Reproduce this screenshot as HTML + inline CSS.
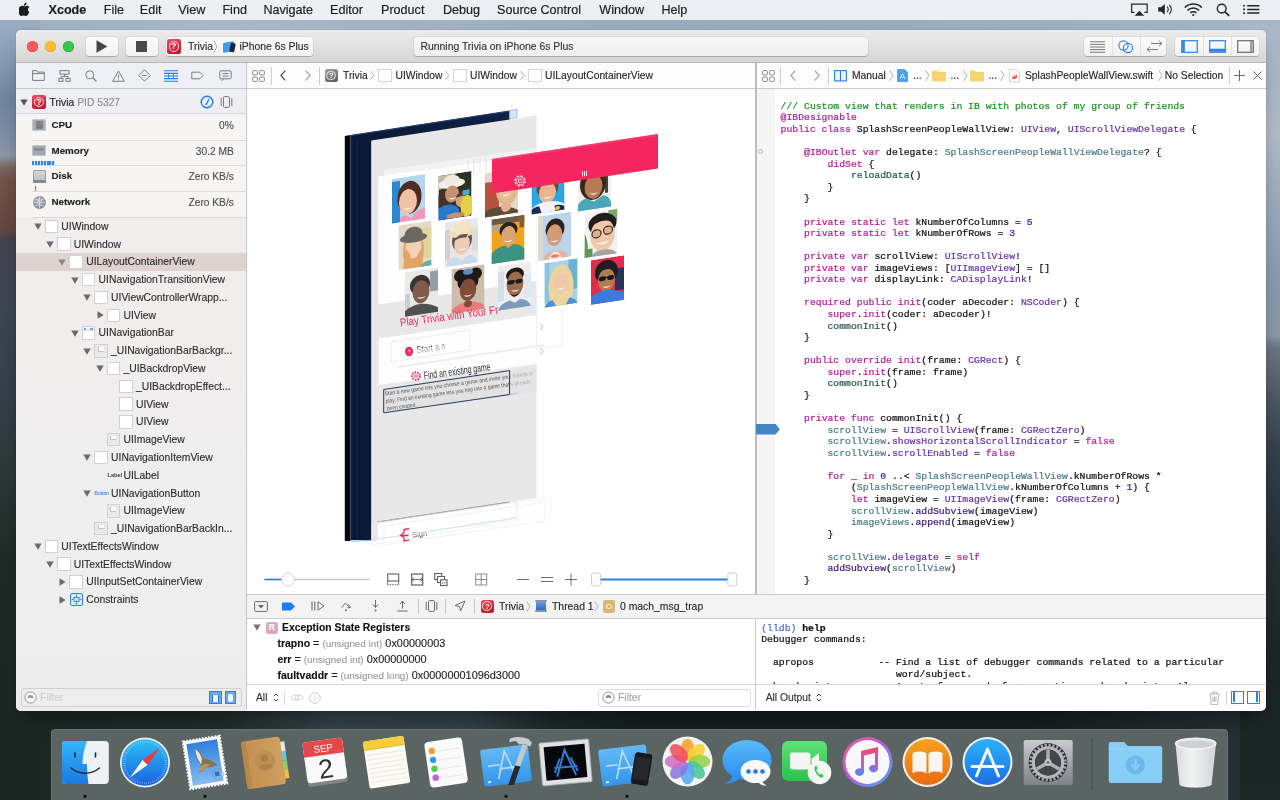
<!DOCTYPE html><html><head><meta charset="utf-8"><title>Xcode</title><style>
*{box-sizing:border-box;margin:0;padding:0}
html,body{width:1280px;height:800px;overflow:hidden}
#win,#menubar,#dock{will-change:transform}
body{position:relative;font-family:"Liberation Sans",sans-serif;font-size:10.3px;color:#262626;background:#2a3535}
.abs{position:absolute}
#wall{position:absolute;left:0;top:0;width:1280px;height:800px}
#menubar{position:absolute;left:0;top:0;width:1280px;height:19.5px;background:rgba(241,243,246,0.93)}
#menubar span{position:absolute;top:2px;font-size:12.6px;line-height:16px;color:#1c1c1c;white-space:nowrap;-webkit-text-stroke:.18px}
#win{position:absolute;left:16px;top:30px;width:1250px;height:680.6px;border-radius:5px;overflow:hidden;background:#fff;box-shadow:0 0 1px rgba(0,0,0,.45),0 14px 22px -8px rgba(0,0,0,.45)}
#toolbar{position:absolute;left:0;top:0;width:1250px;height:32.5px;background:linear-gradient(#ececec,#d6d6d6);border-bottom:1px solid #b9b9b9}
.tbtn{position:absolute;top:7px;height:19px;background:linear-gradient(#fcfcfc,#f1f1f1);border-radius:3.5px;box-shadow:0 0 0 .5px rgba(0,0,0,.09),0 .5px .8px rgba(0,0,0,.2)}
.tl{position:absolute;top:10.5px;width:11px;height:11px;border-radius:50%}
.t{position:absolute;white-space:nowrap;-webkit-text-stroke:.13px}
</style></head><body>
<svg id="wall" width="1280" height="800" viewBox="0 0 1280 800">
<defs>
<linearGradient id="sky" x1="0" y1="0" x2="1" y2="0"><stop offset="0" stop-color="#9eb0c6"/><stop offset=".15" stop-color="#a9b8c9"/><stop offset=".5" stop-color="#9aabbf"/><stop offset=".8" stop-color="#9dadc1"/><stop offset="1" stop-color="#a3b4c8"/></linearGradient>
<linearGradient id="lft" x1="0" y1="0" x2="0" y2="1">
<stop offset="0" stop-color="#a3b5ca"/><stop offset=".075" stop-color="#8a9db5"/><stop offset=".125" stop-color="#7386a0"/><stop offset=".165" stop-color="#7d8ea5"/><stop offset=".195" stop-color="#8d97a6"/><stop offset=".21" stop-color="#7a6560"/><stop offset=".225" stop-color="#74524a"/><stop offset=".285" stop-color="#644840"/><stop offset=".3" stop-color="#44444e"/><stop offset=".375" stop-color="#3f4655"/><stop offset=".5" stop-color="#363f49"/><stop offset=".59" stop-color="#2c3937"/><stop offset=".7" stop-color="#1f2b27"/><stop offset="1" stop-color="#1b2622"/></linearGradient>
<linearGradient id="rgt" x1="0" y1="0" x2="0" y2="1">
<stop offset="0" stop-color="#a6b5c7"/><stop offset=".1" stop-color="#adb9c8"/><stop offset=".17" stop-color="#b2bdc9"/><stop offset=".25" stop-color="#9dacbf"/><stop offset=".34" stop-color="#8c9db3"/><stop offset=".42" stop-color="#8a98a8"/><stop offset=".435" stop-color="#6a7682"/><stop offset=".5" stop-color="#4c5864"/><stop offset=".56" stop-color="#36424d"/><stop offset=".62" stop-color="#2c3842"/><stop offset=".7" stop-color="#232f33"/><stop offset=".85" stop-color="#1b2524"/><stop offset="1" stop-color="#1d2826"/></linearGradient>
<linearGradient id="bot" x1="0" y1="0" x2="1" y2="0"><stop offset="0" stop-color="#1c2723"/><stop offset=".17" stop-color="#202c28"/><stop offset=".26" stop-color="#34444a"/><stop offset=".37" stop-color="#324248"/><stop offset=".43" stop-color="#1e282a"/><stop offset=".5" stop-color="#182022"/><stop offset=".8" stop-color="#171f21"/><stop offset=".96" stop-color="#262f33"/><stop offset="1" stop-color="#222e29"/></linearGradient>
</defs>
<rect y="700" width="1280" height="100" fill="url(#bot)"/>
<rect x="0" y="0" width="40" height="800" fill="url(#lft)"/>
<rect x="1240" y="0" width="40" height="800" fill="url(#rgt)"/>
<rect x="40" y="0" width="1200" height="40" fill="url(#sky)"/>
</svg>
<div id="menubar">
<svg class="abs" style="left:19px;top:2px" width="12" height="15" viewBox="0 0 12 15"><path fill="#1c1c1c" d="M8.3 0.3c.1 1-.3 1.8-.8 2.4-.6.6-1.400 1.100-2.200 1-.1-.9.300-1.800.8-2.300C6.700.7 7.600.3 8.300.3zM11.200 10.700c-.4 1-.7 1.400-1.200 2.200-.8 1.100-1.600 2-2.600 2-.9 0-1.200-.6-2.400-.6s-1.500.6-2.400.6c-1 0-1.700-.9-2.400-1.900C-1.300 10.800-.9 6.500.9 4.900c.800-.8 1.800-1.200 2.800-1.200s1.700.6 2.500.6 1.300-.6 2.600-.6c.9 0 1.900.5 2.600 1.400-2.300 1.300-1.900 4.600-.2 5.600z" transform="scale(.92) translate(0,.3)"/></svg>
<span style="left:48.5px;font-weight:bold;">Xcode</span>
<span style="left:103.8px;">File</span>
<span style="left:139.8px;">Edit</span>
<span style="left:178.2px;">View</span>
<span style="left:222.4px;">Find</span>
<span style="left:263.4px;">Navigate</span>
<span style="left:330px;">Editor</span>
<span style="left:381px;">Product</span>
<span style="left:443px;">Debug</span>
<span style="left:497px;">Source Control</span>
<span style="left:599.3px;">Window</span>
<span style="left:661.4px;">Help</span>
<svg class="abs" style="left:1120px;top:0" width="160" height="20" viewBox="1120 0 160 20" fill="none" stroke="#262626">
<path d="M1134.500 12.300H1131.600V4.100H1147.200V12.300H1144.300" stroke-width="1.200"/><path d="M1139.400 10.800L1134.600 15.700H1144.200z" fill="#262626" stroke="none"/>
<path d="M1158.200 7.300h2.800l3.800-3.200v10.600l-3.800-3.200h-2.800z" fill="#262626" stroke="none"/><path d="M1167 6.700a3.600 3.600 0 0 1 0 5.400M1169.300 4.800a6.300 6.300 0 0 1 0 9.200" stroke-width="1.100"/>
<path d="M1184.800 7.600a12 12 0 0 1 17 0M1187.500 10.400a8.200 8.200 0 0 1 11.600 0M1190.300 13.100a4.200 4.200 0 0 1 6 0" stroke-width="1.500"/><circle cx="1193.300" cy="15" r="1.100" fill="#262626" stroke="none"/>
<circle cx="1221.700" cy="8.600" r="4.400" stroke-width="1.400"/><path d="M1224.900 11.900l4.300 4" stroke-width="1.700"/>
<path d="M1247.200 5.700h12.200M1247.200 9.400h12.200M1247.200 13.100h12.200" stroke-width="1.500"/><path d="M1243.200 5.700h1.800M1243.200 9.400h1.800M1243.200 13.100h1.800" stroke-width="1.600"/>
</svg>
</div>
<div id="win">
<div id="toolbar">
<div class="tl" style="left:11px;background:#fc5b57;box-shadow:inset 0 0 0 .5px #de4339"></div>
<div class="tl" style="left:29px;background:#fdbc2e;box-shadow:inset 0 0 0 .5px #dea032"></div>
<div class="tl" style="left:47px;background:#34c84a;box-shadow:inset 0 0 0 .5px #26a934"></div>
<div class="tbtn" style="left:70px;width:32px"></div>
<div class="tbtn" style="left:110px;width:32px"></div>
<div class="tbtn" style="left:150px;width:147px"></div>
<div class="tbtn" style="left:398px;width:454px;background:linear-gradient(#f8f8f8,#eeeeee)"></div>
<div class="tbtn" style="left:1068px;width:82px"></div>
<div class="tbtn" style="left:1159px;width:84px"></div>
<svg class="abs" style="left:80px;top:10.3px" width="12" height="13" viewBox="0 0 12 13"><path d="M.5 .3v12.400L11.300 6.500z" fill="#454545"/></svg>
<div class="abs" style="left:120.3px;top:10.8px;width:11px;height:11px;background:#4a4a4a"></div>
<div class="abs" style="left:150.5px;top:9.2px;width:14.5px;height:14.5px;border-radius:2.500px;background:linear-gradient(160deg,#f24a5e,#c0102a);color:#fff;font-weight:bold;font-size:8.7px;line-height:14.5px;text-align:center">?<div style="position:absolute;left:2.03px;top:2.03px;width:10.44px;height:10.44px;border-radius:50%;border:.8px solid rgba(255,255,255,.85)"></div></div>
<div class="t" style="left:172px;top:10px;font-size:10.4px;line-height:13px;color:#2a2a2a">Trivia</div>
<svg class="abs" style="left:197.0px;top:10.0px" width="5" height="13" viewBox="0 0 5 13" fill="none" stroke="#a9a9a9" stroke-width="1"><path d="M.8 .5L4 6.5 .8 12.5"/></svg>
<div class="abs" style="left:206.5px;top:11.5px;width:11px;height:10px;background:#3d9bf0;transform:skewY(-8deg);border-radius:1px"></div>
<div class="abs" style="left:214px;top:13px;width:4.500px;height:9px;background:#23262c;border-radius:1px;transform:rotate(12deg)"></div>
<div class="t" style="left:223.5px;top:10px;font-size:10.4px;line-height:13px;color:#2a2a2a">iPhone 6s Plus</div>
<div class="t" style="left:404.5px;top:10px;font-size:10.4px;line-height:13px;color:#333">Running Trivia on iPhone 6s Plus</div>
<div class="abs" style="left:1095.5px;top:7px;width:1px;height:19px;background:#e3e3e3"></div>
<div class="abs" style="left:1123.5px;top:7px;width:1px;height:19px;background:#e3e3e3"></div>
<div class="abs" style="left:1186.5px;top:7px;width:1px;height:19px;background:#e3e3e3"></div>
<div class="abs" style="left:1215px;top:7px;width:1px;height:19px;background:#e3e3e3"></div>
<svg class="abs" style="left:1073.5px;top:11px" width="15" height="12" viewBox="0 0 15 12" stroke="#777" stroke-width="1"><path d="M0 .8h15M0 3.400h15M0 6h15M0 8.600h15M0 11.200h15"/></svg>
<svg class="abs" style="left:1101.5px;top:9.5px" width="16" height="14" viewBox="0 0 16 14" fill="none" stroke="#2b83ea" stroke-width="1.100"><circle cx="5.500" cy="5.500" r="4.600"/><circle cx="10" cy="8" r="4.600"/></svg>
<svg class="abs" style="left:1129.5px;top:10px" width="17" height="13" viewBox="0 0 17 13" fill="none" stroke="#777" stroke-width="1"><path d="M5 3.500h11M13 .8l3 2.700-3 2.700M12 9.500H1M4 6.800L1 9.500l3 2.700"/></svg>
<svg class="abs" style="left:1164.5px;top:10px" width="17" height="13" viewBox="0 0 17 13" fill="none" stroke="#2b83ea" stroke-width="1.200"><rect x=".7" y=".7" width="15.600" height="11.600"/><path d="M2.500 .7v11.600" stroke-width="2.600"/></svg>
<svg class="abs" style="left:1192.5px;top:10px" width="17" height="13" viewBox="0 0 17 13" fill="none" stroke="#2b83ea" stroke-width="1.200"><rect x=".7" y=".7" width="15.600" height="11.600"/><path d="M.7 10.200h15.600" stroke-width="3"/></svg>
<svg class="abs" style="left:1221px;top:10px" width="17" height="13" viewBox="0 0 17 13" fill="none" stroke="#6c6c6c" stroke-width="1.200"><rect x=".7" y=".7" width="15.600" height="11.600"/><path d="M14.300 .7v11.600" stroke-width="2.400" stroke="#9a9a9a"/></svg>
</div>
<div class="abs" style="left:0;top:32.5px;width:230px;height:26.5px;background:#eef0f6;border-bottom:1px solid #c8c8c8"></div>
<div class="abs" style="left:231px;top:32.5px;width:1019px;height:26.5px;background:#fcfcfc;border-bottom:1px solid #cbcbcb"></div>
<div id="nav" class="abs" style="left:0;top:59px;width:230px;height:622px;background:linear-gradient(#f4efef 0,#f1eded 35%,#efefef 70%,#ececec 100%)"></div>
<div class="abs" style="left:230px;top:33px;width:1px;height:647px;background:#c4c4c4"></div>
<svg class="abs" style="left:15.5px;top:40.0px" width="13" height="11" viewBox="0 0 13 11" fill="none" stroke="#7d7d7d" stroke-width="1"><path d="M.6 10.400V.6h4l1 1.500h6.800v8.300z"/><path d="M.6 3.600h11.800"/></svg>
<svg class="abs" style="left:42.3px;top:39.5px" width="13" height="12" viewBox="0 0 13 12" fill="none" stroke="#7d7d7d" stroke-width="1"><rect x="2" y=".6" width="9" height="3.500"/><path d="M6.500 4v2.500M3 8.500v-2h7v2"/><rect x=".8" y="8.500" width="4.200" height="2.800"/><rect x="8" y="8.500" width="4.200" height="2.800"/></svg>
<svg class="abs" style="left:69.0px;top:39.5px" width="12" height="12" viewBox="0 0 12 12" fill="none" stroke="#7d7d7d" stroke-width="1"><circle cx="4.800" cy="4.800" r="4"/><path d="M7.800 7.800l3.600 3.600" stroke-width="1.300"/></svg>
<svg class="abs" style="left:95.8px;top:39.5px" width="13" height="12" viewBox="0 0 13 12" fill="none" stroke="#7d7d7d" stroke-width="1"><path d="M6.500 1L12.300 11.300H.7z"/><path d="M6.500 4.500v3.800M6.500 9.300v1"/></svg>
<svg class="abs" style="left:122.3px;top:39.0px" width="13" height="13" viewBox="0 0 13 13" fill="none" stroke="#7d7d7d" stroke-width="1"><path d="M6.500 .8l5.700 5.700-5.700 5.700L.8 6.500z"/><path d="M4.300 6.500h4.400"/></svg>
<svg class="abs" style="left:148.4px;top:39.5px" width="14" height="12" viewBox="0 0 14 12" fill="none" stroke="#1d7cf2" stroke-width="1.100"><path d="M0 .8h14M0 3.400h14M0 6h14M0 8.600h14M0 11.200h14" /><path d="M4.500 3.400v5.200M9.500 3.400v5.200" stroke-width=".8"/></svg>
<svg class="abs" style="left:175.0px;top:41.0px" width="13" height="9" viewBox="0 0 13 9" fill="none" stroke="#7d7d7d" stroke-width="1"><path d="M.8 1.200h8l3.300 3.300-3.300 3.300h-8z"/></svg>
<svg class="abs" style="left:202.5px;top:39.5px" width="13" height="12" viewBox="0 0 13 12" fill="none" stroke="#7d7d7d" stroke-width="1"><rect x=".8" y=".8" width="11.400" height="8" rx="1.200"/><path d="M3 10.800l1.500-2M3.500 3.500h6M3.500 6h6"/></svg>
<div class="abs" style="left:0;top:59px;width:230px;height:25px;background:#eeeef3;border-bottom:1px solid #d6d5d8"></div>
<div class="abs" style="left:0;top:84px;width:230px;height:103px;background:#f7f4f4"></div>
<svg class="abs" style="left:4.3px;top:68.5px" width="8" height="7" viewBox="0 0 8 7"><path d="M.3 .5h7.400L4 6.700z" fill="#555"/></svg>
<div class="abs" style="left:16px;top:65px;width:14px;height:14px;border-radius:2.500px;background:linear-gradient(160deg,#f24a5e,#c0102a);color:#fff;font-weight:bold;font-size:8.4px;line-height:14px;text-align:center">?<div style="position:absolute;left:1.96px;top:1.96px;width:10.08px;height:10.08px;border-radius:50%;border:.8px solid rgba(255,255,255,.85)"></div></div>
<div class="t" style="left:33.5px;top:65.5px;font-size:10.3px;line-height:13px;color:#222">Trivia <span style="color:#8f8f8f">PID 5327</span></div>
<svg class="abs" style="left:183.5px;top:65px" width="14" height="14" viewBox="0 0 14 14" fill="none" stroke="#1d7cf2"><circle cx="7" cy="7" r="5.800" stroke-width="1.400"/><path d="M6.300 9.300L9 4.200" stroke-width="1.300"/><circle cx="6.300" cy="9.200" r=".9" fill="#1d7cf2" stroke="none"/></svg>
<svg class="abs" style="left:204px;top:66px" width="13" height="12" viewBox="0 0 13 12" fill="none" stroke="#7a7a7a"><rect x="3.500" y=".6" width="6" height="10.800" rx="1"/><path d="M1.200 2v8M11.800 2v8"/></svg>
<div class="t" style="left:35.5px;top:88.2px;font-size:9.8px;line-height:13px;font-weight:bold;color:#1e1e1e">CPU</div>
<div class="t" style="right:1032.2px;top:88.9px;font-size:10.2px;line-height:13px;color:#4e4e4e">0%</div>
<div class="abs" style="left:16px;top:109.8px;width:214px;height:1px;background:#dedada"></div>
<div class="t" style="left:35.5px;top:113.8px;font-size:9.8px;line-height:13px;font-weight:bold;color:#1e1e1e">Memory</div>
<div class="t" style="right:1032.2px;top:114.5px;font-size:10.2px;line-height:13px;color:#4e4e4e">30.2 MB</div>
<div class="abs" style="left:16px;top:135.4px;width:214px;height:1px;background:#dedada"></div>
<div class="t" style="left:35.5px;top:139.3px;font-size:9.8px;line-height:13px;font-weight:bold;color:#1e1e1e">Disk</div>
<div class="t" style="right:1032.2px;top:140.0px;font-size:10.2px;line-height:13px;color:#4e4e4e">Zero KB/s</div>
<div class="abs" style="left:16px;top:161px;width:214px;height:1px;background:#dedada"></div>
<div class="t" style="left:35.5px;top:165.0px;font-size:9.8px;line-height:13px;font-weight:bold;color:#1e1e1e">Network</div>
<div class="t" style="right:1032.2px;top:165.7px;font-size:10.2px;line-height:13px;color:#4e4e4e">Zero KB/s</div>
<div class="abs" style="left:16px;top:186.8px;width:214px;height:1px;background:#dedada"></div>
<div class="abs" style="left:16.3px;top:88.5px;width:13.500px;height:12.500px;border-radius:2.500px;background:#a9adb3;box-shadow:inset 0 0 0 1px #c5c8cc"></div>
<div class="abs" style="left:19.5px;top:91px;width:7px;height:7.500px;border-radius:1px;background:#7d8289"></div>
<div class="abs" style="left:16.3px;top:115.3px;width:13.500px;height:10.500px;border-radius:2px;background:#a4a8ae;box-shadow:inset 0 0 0 1px #c2c5c9"></div>
<div class="abs" style="left:18px;top:118px;width:10px;height:3px;background:#8a8f96"></div>
<div class="abs" style="left:16px;top:130.6px;width:23px;height:4.800px;background:repeating-linear-gradient(90deg,#2a86f0 0,#2a86f0 2px,#d6e4f6 2px,#d6e4f6 2.900px)"></div>
<div class="abs" style="left:17px;top:140.3px;width:12.500px;height:12.500px;border-radius:1.500px;background:linear-gradient(#d8d8d8,#b9bbbe);box-shadow:inset 0 0 0 1px #9b9ea3"></div>
<div class="abs" style="left:17px;top:150px;width:12.500px;height:3px;border-radius:0 0 1.500px 1.500px;background:#858a91"></div>
<div class="abs" style="left:18.6px;top:156px;width:1.600px;height:4.800px;background:#2a86f0"></div>
<div class="abs" style="left:16.6px;top:165.5px;width:13px;height:13px;border-radius:50%;background:radial-gradient(circle at 45% 40%,#b9bdc6,#7f8590 70%)"></div>
<svg class="abs" style="left:16.6px;top:165.5px" width="13" height="13" viewBox="0 0 13 13" fill="none" stroke="#e4e6ea" stroke-width=".7"><path d="M6.500 .5v12M.5 6.500h12M2 3c3 1.500 6 1.500 9 0M2 10c3-1.500 6-1.500 9 0"/></svg>
<svg class="abs" style="left:17.5px;top:193.2px" width="8" height="7" viewBox="0 0 8 7"><path d="M.3 .5h7.400L4 6.700z" fill="#6b6b6b"/></svg>
<div class="abs" style="left:28.6px;top:189.6px;width:13.500px;height:13.500px;background:#fff;border:1px solid #d2d0d0"></div>
<div class="t" style="left:45.3px;top:189.8px;font-size:10.35px;line-height:13px;color:#2c2c2c">UIWindow</div>
<svg class="abs" style="left:29.94px;top:210.98px" width="8" height="7" viewBox="0 0 8 7"><path d="M.3 .5h7.400L4 6.700z" fill="#6b6b6b"/></svg>
<div class="abs" style="left:41.04px;top:207.38px;width:13.500px;height:13.500px;background:#fff;border:1px solid #d2d0d0"></div>
<div class="t" style="left:57.74px;top:207.58px;font-size:10.35px;line-height:13px;color:#2c2c2c">UIWindow</div>
<div class="abs" style="left:0;top:223.26px;width:230px;height:17.400px;background:#dfd3d2"></div>
<svg class="abs" style="left:42.38px;top:228.76px" width="8" height="7" viewBox="0 0 8 7"><path d="M.3 .5h7.400L4 6.700z" fill="#8a8a8a"/></svg>
<div class="abs" style="left:53.48px;top:225.16px;width:13.500px;height:13.500px;background:#fff;border:1px solid #d2d0d0"></div>
<div class="t" style="left:70.18px;top:225.36px;font-size:10.35px;line-height:13px;color:#2c2c2c">UILayoutContainerView</div>
<svg class="abs" style="left:54.82px;top:246.54px" width="8" height="7" viewBox="0 0 8 7"><path d="M.3 .5h7.400L4 6.700z" fill="#6b6b6b"/></svg>
<div class="abs" style="left:65.92px;top:242.94px;width:13.500px;height:13.500px;background:#fff;border:1px solid #d2d0d0"></div>
<div class="t" style="left:82.62px;top:243.14px;font-size:10.35px;line-height:13px;color:#2c2c2c">UINavigationTransitionView</div>
<svg class="abs" style="left:67.26px;top:264.32px" width="8" height="7" viewBox="0 0 8 7"><path d="M.3 .5h7.400L4 6.700z" fill="#6b6b6b"/></svg>
<div class="abs" style="left:78.36px;top:260.72px;width:13.500px;height:13.500px;background:#fff;border:1px solid #d2d0d0"></div>
<div class="t" style="left:95.06px;top:260.92px;font-size:10.35px;line-height:13px;color:#2c2c2c">UIViewControllerWrapp...</div>
<svg class="abs" style="left:80.7px;top:281.3px" width="7" height="8" viewBox="0 0 7 8"><path d="M.5 .3v7.400L6.700 4z" fill="#6b6b6b"/></svg>
<div class="abs" style="left:90.8px;top:278.5px;width:13.500px;height:13.500px;background:#fff;border:1px solid #d2d0d0"></div>
<div class="t" style="left:107.5px;top:278.7px;font-size:10.35px;line-height:13px;color:#2c2c2c">UIView</div>
<svg class="abs" style="left:54.82px;top:299.88px" width="8" height="7" viewBox="0 0 8 7"><path d="M.3 .5h7.400L4 6.700z" fill="#6b6b6b"/></svg>
<div class="abs" style="left:65.92px;top:296.28px;width:13.500px;height:13.500px;background:#fff;border:1px solid #d2d0d0"></div>
<div class="abs" style="left:66.92px;top:297.28px;width:11.500px;height:3.500px;background:#f4f4f4;border-bottom:1px solid #d5d5d5"></div>
<div class="abs" style="left:68.42px;top:298.48px;width:1.500px;height:1.200px;background:#6aa6ee"></div>
<div class="abs" style="left:74.42px;top:298.48px;width:2.500px;height:1.200px;background:#6aa6ee"></div>
<div class="t" style="left:82.62px;top:296.48px;font-size:10.35px;line-height:13px;color:#2c2c2c">UINavigationBar</div>
<svg class="abs" style="left:67.26px;top:317.66px" width="8" height="7" viewBox="0 0 8 7"><path d="M.3 .5h7.400L4 6.700z" fill="#6b6b6b"/></svg>
<div class="abs" style="left:78.36px;top:314.06px;width:13.500px;height:13.500px;background:#fff;border:1px solid #d2d0d0"></div>
<div class="abs" style="left:79.36px;top:315.06px;width:11.500px;height:11.500px;background:#e9e9e9"></div>
<div class="abs" style="left:81.86px;top:317.06px;width:6px;height:4.500px;background:#fafafa;border-left:1px solid #c6c6c6;border-bottom:1px solid #c6c6c6"></div>
<div class="t" style="left:95.06px;top:314.26px;font-size:10.35px;line-height:13px;color:#2c2c2c">_UINavigationBarBackgr...</div>
<svg class="abs" style="left:79.7px;top:335.44px" width="8" height="7" viewBox="0 0 8 7"><path d="M.3 .5h7.400L4 6.700z" fill="#6b6b6b"/></svg>
<div class="abs" style="left:90.8px;top:331.84px;width:13.500px;height:13.500px;background:#fff;border:1px solid #d2d0d0"></div>
<div class="t" style="left:107.5px;top:332.04px;font-size:10.35px;line-height:13px;color:#2c2c2c">_UIBackdropView</div>
<div class="abs" style="left:103.24px;top:349.62px;width:13.500px;height:13.500px;background:#fff;border:1px solid #d2d0d0"></div>
<div class="t" style="left:119.94px;top:349.82px;font-size:10.35px;line-height:13px;color:#2c2c2c">_UIBackdropEffect...</div>
<div class="abs" style="left:103.24px;top:367.4px;width:13.500px;height:13.500px;background:#fff;border:1px solid #d2d0d0"></div>
<div class="t" style="left:119.94px;top:367.6px;font-size:10.35px;line-height:13px;color:#2c2c2c">UIView</div>
<div class="abs" style="left:103.24px;top:385.18px;width:13.500px;height:13.500px;background:#fff;border:1px solid #d2d0d0"></div>
<div class="t" style="left:119.94px;top:385.38px;font-size:10.35px;line-height:13px;color:#2c2c2c">UIView</div>
<div class="abs" style="left:90.8px;top:402.96px;width:13.500px;height:13.500px;background:#fff;border:1px solid #d2d0d0"></div>
<div class="abs" style="left:91.8px;top:403.96px;width:11.500px;height:11.500px;background:#e9e9e9"></div>
<div class="abs" style="left:94.3px;top:405.96px;width:6px;height:4.500px;background:#fafafa;border-left:1px solid #c6c6c6;border-bottom:1px solid #c6c6c6"></div>
<div class="t" style="left:107.5px;top:403.16px;font-size:10.35px;line-height:13px;color:#2c2c2c">UIImageView</div>
<svg class="abs" style="left:67.26px;top:424.34px" width="8" height="7" viewBox="0 0 8 7"><path d="M.3 .5h7.400L4 6.700z" fill="#6b6b6b"/></svg>
<div class="abs" style="left:78.36px;top:420.74px;width:13.500px;height:13.500px;background:#fff;border:1px solid #d2d0d0"></div>
<div class="t" style="left:95.06px;top:420.94px;font-size:10.35px;line-height:13px;color:#2c2c2c">UINavigationItemView</div>
<div class="t" style="left:91.6px;top:441.52px;font-size:5.6px;line-height:7px;color:#555;font-weight:bold">Label</div>
<div class="t" style="left:107.5px;top:438.72px;font-size:10.35px;line-height:13px;color:#2c2c2c">UILabel</div>
<svg class="abs" style="left:67.26px;top:459.9px" width="8" height="7" viewBox="0 0 8 7"><path d="M.3 .5h7.400L4 6.700z" fill="#6b6b6b"/></svg>
<div class="t" style="left:78.56px;top:459.9px;font-size:5px;line-height:6px;color:#4a90e6">Button</div>
<div class="t" style="left:95.06px;top:456.5px;font-size:10.35px;line-height:13px;color:#2c2c2c">UINavigationButton</div>
<div class="abs" style="left:90.8px;top:474.08px;width:13.500px;height:13.500px;background:#fff;border:1px solid #d2d0d0"></div>
<div class="abs" style="left:91.8px;top:475.08px;width:11.500px;height:11.500px;background:#e9e9e9"></div>
<div class="abs" style="left:94.3px;top:477.08px;width:6px;height:4.500px;background:#fafafa;border-left:1px solid #c6c6c6;border-bottom:1px solid #c6c6c6"></div>
<div class="t" style="left:107.5px;top:474.28px;font-size:10.35px;line-height:13px;color:#2c2c2c">UIImageView</div>
<div class="abs" style="left:78.36px;top:491.86px;width:13.500px;height:13.500px;background:#fff;border:1px solid #d2d0d0"></div>
<div class="abs" style="left:79.36px;top:492.86px;width:11.500px;height:11.500px;background:#e9e9e9"></div>
<div class="abs" style="left:81.86px;top:494.86px;width:6px;height:4.500px;background:#fafafa;border-left:1px solid #c6c6c6;border-bottom:1px solid #c6c6c6"></div>
<div class="t" style="left:95.06px;top:492.06px;font-size:10.35px;line-height:13px;color:#2c2c2c">_UINavigationBarBackIn...</div>
<svg class="abs" style="left:17.5px;top:513.24px" width="8" height="7" viewBox="0 0 8 7"><path d="M.3 .5h7.400L4 6.700z" fill="#6b6b6b"/></svg>
<div class="abs" style="left:28.6px;top:509.64px;width:13.500px;height:13.500px;background:#fff;border:1px solid #d2d0d0"></div>
<div class="t" style="left:45.3px;top:509.84px;font-size:10.35px;line-height:13px;color:#2c2c2c">UITextEffectsWindow</div>
<svg class="abs" style="left:29.94px;top:531.02px" width="8" height="7" viewBox="0 0 8 7"><path d="M.3 .5h7.400L4 6.700z" fill="#6b6b6b"/></svg>
<div class="abs" style="left:41.04px;top:527.42px;width:13.500px;height:13.500px;background:#fff;border:1px solid #d2d0d0"></div>
<div class="t" style="left:57.74px;top:527.62px;font-size:10.35px;line-height:13px;color:#2c2c2c">UITextEffectsWindow</div>
<svg class="abs" style="left:43.38px;top:548.0px" width="7" height="8" viewBox="0 0 7 8"><path d="M.5 .3v7.400L6.700 4z" fill="#6b6b6b"/></svg>
<div class="abs" style="left:53.48px;top:545.2px;width:13.500px;height:13.500px;background:#fff;border:1px solid #d2d0d0"></div>
<div class="t" style="left:70.18px;top:545.4px;font-size:10.35px;line-height:13px;color:#2c2c2c">UIInputSetContainerView</div>
<svg class="abs" style="left:43.38px;top:565.78px" width="7" height="8" viewBox="0 0 7 8"><path d="M.5 .3v7.400L6.700 4z" fill="#6b6b6b"/></svg>
<div class="abs" style="left:54.08px;top:563.38px;width:13px;height:13px;border-radius:2px;background:#dbe9fb;border:1.200px solid #2f7ee0"></div>
<svg class="abs" style="left:54.08px;top:563.38px" width="13" height="13" viewBox="0 0 13 13" fill="none" stroke="#2f7ee0" stroke-width=".9"><rect x="4" y="4.500" width="5" height="4"/><path d="M6.500 1.500v2.500M6.500 9v2.500M1.500 6.500h2M9.500 6.500h2"/></svg>
<div class="t" style="left:70.18px;top:563.18px;font-size:10.35px;line-height:13px;color:#2c2c2c">Constraints</div>
<div class="abs" style="left:5px;top:658px;width:220.500px;height:18.500px;border:1px solid #d0d0d0;border-radius:3px;background:#ededed"></div>
<svg class="abs" style="left:8px;top:661.2px" width="13" height="13" viewBox="0 0 13 13"><circle cx="6.500" cy="6.500" r="5.600" fill="#f6f6f6" stroke="#9b9b9b" stroke-width="1"/><path d="M3.800 6.200a2.700 2.200 0 0 1 5.400 0v.8H3.800z" fill="#9b9b9b"/></svg>
<div class="t" style="left:24px;top:661px;font-size:10.5px;line-height:13px;color:#cfcfcf">Filter</div>
<div class="abs" style="left:192.7px;top:661px;width:13.2px;height:13px;background:#6aa8f2;border:1.600px solid #2a80e6"></div>
<div class="abs" style="left:208.8px;top:661px;width:11.4px;height:13px;background:#6aa8f2;border:1.600px solid #2a80e6"></div>
<div class="abs" style="left:195.6px;top:664.5px;width:7.400px;height:7.500px;border-left:1.800px solid #2a6fd8;border-right:1.800px solid #2a6fd8;background:#eaf2fd"></div>
<div class="abs" style="left:212px;top:664px;width:5px;height:7.500px;background:#f2f6fd;border-radius:2px"></div>
<div id="center" class="abs" style="left:231px;top:59px;width:509px;height:505px;background:#fff"></div>
<svg class="abs" style="left:236.3px;top:39.7px" width="13" height="12" viewBox="0 0 13 12" fill="none" stroke="#8a8a8a" stroke-width="1"><rect x=".6" y=".6" width="4.800" height="4.300" rx=".8"/><rect x="7.600" y=".6" width="4.800" height="4.300" rx=".8"/><rect x=".6" y="7.100" width="4.800" height="4.300" rx=".8"/><rect x="7.600" y="7.100" width="4.800" height="4.300" rx=".8"/></svg>
<div class="abs" style="left:255px;top:36.5px;width:1px;height:18px;background:#cdcdcd"></div>
<svg class="abs" style="left:264.3px;top:40.1px" width="6" height="11" viewBox="0 0 6 11" fill="none" stroke="#4d4d4d" stroke-width="1.150"><path d="M5.200 .6L.9 5.500l4.300 4.900"/></svg>
<svg class="abs" style="left:289px;top:40.1px" width="6" height="11" viewBox="0 0 6 11" fill="none" stroke="#a2a2a2" stroke-width="1.150"><path d="M.8 .6l4.300 4.900L.8 10.400"/></svg>
<div class="abs" style="left:302.5px;top:36.5px;width:1px;height:18px;background:#cdcdcd"></div>
<div class="abs" style="left:308.6px;top:38.8px;width:13.5px;height:13.5px;border-radius:2.500px;background:linear-gradient(160deg,#a0a0a0,#5a5a5a);color:#fff;font-weight:bold;font-size:8.1px;line-height:13.5px;text-align:center">?<div style="position:absolute;left:1.89px;top:1.89px;width:9.72px;height:9.72px;border-radius:50%;border:.8px solid rgba(255,255,255,.85)"></div></div>
<div class="t" style="left:327px;top:39.1px;font-size:10.3px;line-height:13px;color:#262626;">Trivia</div>
<svg class="abs" style="left:354.3px;top:41.1px" width="5" height="9" viewBox="0 0 5 9" fill="none" stroke="#b0b0b0" stroke-width="1"><path d="M.8 .5L4 4.5 .8 8.5"/></svg>
<div class="abs" style="left:362px;top:38.8px;width:13.500px;height:13.500px;background:#fff;border:1px solid #d4d4d4"></div>
<div class="t" style="left:379.5px;top:39.1px;font-size:10.3px;line-height:13px;color:#262626;">UIWindow</div>
<svg class="abs" style="left:429.1px;top:41.1px" width="5" height="9" viewBox="0 0 5 9" fill="none" stroke="#b0b0b0" stroke-width="1"><path d="M.8 .5L4 4.5 .8 8.5"/></svg>
<div class="abs" style="left:437px;top:38.8px;width:13.500px;height:13.500px;background:#fff;border:1px solid #d4d4d4"></div>
<div class="t" style="left:454px;top:39.1px;font-size:10.3px;line-height:13px;color:#262626;">UIWindow</div>
<svg class="abs" style="left:504.0px;top:41.1px" width="5" height="9" viewBox="0 0 5 9" fill="none" stroke="#b0b0b0" stroke-width="1"><path d="M.8 .5L4 4.5 .8 8.5"/></svg>
<div class="abs" style="left:512.3px;top:38.8px;width:13.500px;height:13.500px;background:#fff;border:1px solid #d4d4d4"></div>
<div class="t" style="left:529px;top:39.1px;font-size:10.3px;line-height:13px;color:#262626;">UILayoutContainerView</div>
<svg class="abs" style="left:745.5px;top:39.7px" width="13" height="12" viewBox="0 0 13 12" fill="none" stroke="#8a8a8a" stroke-width="1"><rect x=".6" y=".6" width="4.800" height="4.300" rx=".8"/><rect x="7.600" y=".6" width="4.800" height="4.300" rx=".8"/><rect x=".6" y="7.100" width="4.800" height="4.300" rx=".8"/><rect x="7.600" y="7.100" width="4.800" height="4.300" rx=".8"/></svg>
<div class="abs" style="left:764.3px;top:36.5px;width:1px;height:18px;background:#cdcdcd"></div>
<svg class="abs" style="left:773.8px;top:40.1px" width="6" height="11" viewBox="0 0 6 11" fill="none" stroke="#a2a2a2" stroke-width="1.150"><path d="M5.200 .6L.9 5.500l4.300 4.900"/></svg>
<svg class="abs" style="left:797.8px;top:40.1px" width="6" height="11" viewBox="0 0 6 11" fill="none" stroke="#a2a2a2" stroke-width="1.150"><path d="M.8 .6l4.300 4.900L.8 10.400"/></svg>
<div class="abs" style="left:812px;top:36.5px;width:1px;height:18px;background:#cdcdcd"></div>
<svg class="abs" style="left:818px;top:40px" width="13" height="11.500" viewBox="0 0 13 11.500" fill="#eaf2fd" stroke="#2b7de0" stroke-width="1.100"><rect x=".6" y=".6" width="11.800" height="10.300"/><path d="M6.500 .6v10.300"/></svg>
<div class="t" style="left:836px;top:39.1px;font-size:10.3px;line-height:13px;color:#262626;">Manual</div>
<svg class="abs" style="left:872.5px;top:40.1px" width="5" height="11" viewBox="0 0 5 11" fill="none" stroke="#b0b0b0" stroke-width="1"><path d="M.8 .5L4 5.5 .8 10.5"/></svg>
<svg class="abs" style="left:881px;top:39.3px" width="11" height="13" viewBox="0 0 11 13"><path d="M.5 .5h7l3 3v9H.5z" fill="#4aa0f0" stroke="#2f86e0" stroke-width=".6"/><path d="M3 10l2.500-5.500L8 10M3.800 8.300h3.400" stroke="#dff0ff" stroke-width=".9" fill="none"/></svg>
<div class="t" style="left:897px;top:39.1px;font-size:10.3px;line-height:13px;color:#262626;">...</div>
<svg class="abs" style="left:908.5px;top:40.1px" width="5" height="11" viewBox="0 0 5 11" fill="none" stroke="#b0b0b0" stroke-width="1"><path d="M.8 .5L4 5.5 .8 10.5"/></svg>
<svg class="abs" style="left:916px;top:40px" width="14" height="11.500" viewBox="0 0 14 11.500"><path d="M0 1.200a.8.8 0 0 1 .8-.8h4l1 1.300h7.400a.8.8 0 0 1 .8.800v8.200a.8.800 0 0 1-.8.800H.8a.8.800 0 0 1-.8-.8z" fill="#f3d671"/><path d="M0 3.200h14" stroke="#e6c75c" stroke-width=".6"/></svg>
<div class="t" style="left:934.5px;top:39.1px;font-size:10.3px;line-height:13px;color:#262626;">...</div>
<svg class="abs" style="left:947.0px;top:40.1px" width="5" height="11" viewBox="0 0 5 11" fill="none" stroke="#b0b0b0" stroke-width="1"><path d="M.8 .5L4 5.5 .8 10.5"/></svg>
<svg class="abs" style="left:954px;top:40px" width="14" height="11.500" viewBox="0 0 14 11.500"><path d="M0 1.200a.8.8 0 0 1 .8-.8h4l1 1.300h7.400a.8.8 0 0 1 .8.800v8.200a.8.800 0 0 1-.8.800H.8a.8.800 0 0 1-.8-.8z" fill="#f3d671"/><path d="M0 3.200h14" stroke="#e6c75c" stroke-width=".6"/></svg>
<div class="t" style="left:972.5px;top:39.1px;font-size:10.3px;line-height:13px;color:#262626;">...</div>
<svg class="abs" style="left:983.5px;top:40.1px" width="5" height="11" viewBox="0 0 5 11" fill="none" stroke="#b0b0b0" stroke-width="1"><path d="M.8 .5L4 5.5 .8 10.5"/></svg>
<svg class="abs" style="left:993px;top:39px" width="11" height="13.500" viewBox="0 0 11 13.500"><path d="M.5 .5h7l3 3v9.500H.5z" fill="#fbfbfb" stroke="#c9c9c9" stroke-width=".7"/><path d="M3 9.500c2 1 4.500.5 5-1.500.3-1.200-.5-2.500-1.500-3 .5 1 .3 2-.3 2.500C5 6.500 4 5.500 3.500 5c.5 1.200 1.200 2.200 2 3-.8.300-1.800 0-2.800-.6.300.8.800 1.500.300 2.100z" fill="#f05138"/></svg>
<div class="t" style="left:1009px;top:39.1px;font-size:10.3px;line-height:13px;color:#262626;">SplashPeopleWallView.swift</div>
<svg class="abs" style="left:1141.5px;top:40.1px" width="5" height="11" viewBox="0 0 5 11" fill="none" stroke="#b0b0b0" stroke-width="1"><path d="M.8 .5L4 5.5 .8 10.5"/></svg>
<div class="t" style="left:1148.8px;top:39.1px;font-size:10.3px;line-height:13px;color:#262626;">No Selection</div>
<div class="abs" style="left:1212.5px;top:37px;width:1px;height:17px;background:#d2d2d2"></div>
<svg class="abs" style="left:1218px;top:40px" width="11" height="11" viewBox="0 0 11 11" stroke="#666" stroke-width="1"><path d="M5.500 0v11M0 5.500h11"/></svg>
<svg class="abs" style="left:1236.7px;top:41.2px" width="9" height="9" viewBox="0 0 9 9" stroke="#666" stroke-width="1"><path d="M.4 .4l8.200 8.200M8.600 .4L.4 8.600"/></svg>
<svg class="abs" style="left:231px;top:58px" width="508" height="506" viewBox="247 88 508 506">
<defs><clipPath id="pc"><rect width="33" height="44.500"/></clipPath><linearGradient id="navy" x1="0" x2="1"><stop offset="0" stop-color="#0b1936"/><stop offset="1" stop-color="#102144"/></linearGradient></defs>
<polygon points="344.800,136 350.500,135.100 350.500,541 344.800,541" fill="#04070e"/>
<polygon points="350.500,135.100 509.700,110.600 509.700,122 371.500,142 371.500,540 350.500,540" fill="url(#navy)"/>
<path d="M350.800 135.600L509.500 111.200" stroke="#2a4a8a" stroke-width=".8" fill="none"/>
<path d="M351 541.300l21-1" stroke="#8db2ea" stroke-width="1" fill="none"/>
<path d="M352 140v400M357 139v400" stroke="#1b3468" stroke-width=".5" fill="none"/>
<polygon points="509.700,110.600 517,109.500 517,117.500 509.700,118.600" fill="#d9e6fa" stroke="#8fb2ea" stroke-width=".8"/>
<polygon points="371.400,140.400 536.600,115.400 536.600,498 377.600,522 377.600,541 371.400,541" fill="#e8e8e8"/>
<polygon points="378.400,176.200 536.600,155 536.600,281 378.400,304.500" fill="#ffffff" fill-opacity=".93"/>
<polygon points="384,170 536.600,148 536.600,160 384,182" fill="#ffffff" fill-opacity=".45"/>
<path d="M468 160v16M474 159v16M480 158v16M486 157v16" stroke="#d6d6d6" stroke-width=".6" fill="none"/>
<polygon points="378.600,338.700 536.600,315 543,314 543,362 536.600,364 378.600,385" fill="#ffffff" fill-opacity=".96"/>
<polygon points="536.600,297 562,293 562,345 536.600,349" fill="none" stroke="#e9e9e9" stroke-width=".7"/>
<polygon points="391,342 470,330 470,350 391,362" fill="none" stroke="#e4e4e4" stroke-width=".7"/>
<polygon points="398,366 544,344 544,346 398,368" fill="#ededed"/>
<path d="M540.500 323.5l2.500 3.300-2.500 3.400" stroke="#b9b9b9" stroke-width="1" fill="none"/>
<path d="M540.500 348.0l2.500 3.300-2.500 3.400" stroke="#b9b9b9" stroke-width="1" fill="none"/>
<g transform="matrix(1 -0.15 0 1 392.0 179.0)"><g clip-path="url(#pc)"><rect x="0" y="0" width="33" height="45" fill="#b4d6ee" /><rect x="0" y="3" width="8" height="42" fill="#2a88cf" /><ellipse cx="17.5" cy="21" rx="12" ry="16.5" fill="#4e2c20" /><ellipse cx="16" cy="25" rx="9" ry="12.5" fill="#f1c3a6" /><path d="M6 20c1-10 7-14 12-14s11 4 11 12c-4-5-9-7-13-6s-8 4-10 8z" fill="#4e2c20"/><path d="M11.5 31q4.500 4 9 0q-4.500 1.400-9 0z" fill="#fff" fill-opacity=".9"/><path d="M8 45v-5c3-2 6-2 8 0l4 2c2-5 7-8 13-8v11z" fill="#f498b8"/></g></g>
<g transform="matrix(1 -0.15 0 1 438.5 176.0)"><g clip-path="url(#pc)"><rect x="0" y="0" width="33" height="45" fill="#2c3322" /><rect x="0" y="0" width="17" height="14" fill="#c9b9a0" /><ellipse cx="6" cy="26" rx="7" ry="14" fill="#46302a" /><ellipse cx="13" cy="9.5" rx="13.5" ry="4.8" fill="#f5f1ea" /><ellipse cx="13" cy="6" rx="8" ry="5" fill="#efe9df" /><ellipse cx="13.5" cy="20" rx="7" ry="8.5" fill="#c58f70" /><ellipse cx="23" cy="28" rx="5.8" ry="6.5" fill="#d9a283" /><path d="M17 25c1-4 5-6 9-5 2 1 3 3 3 5-3-2-8-2-12 0z" fill="#5a3a28"/><ellipse cx="28.5" cy="34" rx="6.5" ry="11" fill="#e6d044" /><rect x="24" y="18" width="7" height="5" fill="#3fb0d2" /><ellipse cx="9" cy="39" rx="12" ry="9" fill="#2878d0" /><ellipse cx="17" cy="42" rx="9" ry="3" fill="#c58f70" /><path d="M9.5 23.5q4.500 4 9 0q-4.500 1.400-9 0z" fill="#fff" fill-opacity=".9"/></g></g>
<g transform="matrix(1 -0.15 0 1 485.0 173.0)"><g clip-path="url(#pc)"><rect x="0" y="0" width="33" height="45" fill="#e9d6cc" /><rect x="0" y="10" width="14" height="35" fill="#b8523c" /><ellipse cx="22" cy="20" rx="11" ry="15" fill="#d9ba8a" /><ellipse cx="21" cy="20" rx="7.5" ry="10" fill="#ebbd9e" /><path d="M0 45v-6c6-3 14-4 22-2 5 1 8 3 11 5v3z" fill="#5e4c3a"/><ellipse cx="21" cy="37" rx="5" ry="5" fill="#e3b291" /><path d="M16.5 24q4.500 4 9 0q-4.500 1.400-9 0z" fill="#fff" fill-opacity=".9"/></g></g>
<g transform="matrix(1 -0.15 0 1 531.5 170.0)"><g clip-path="url(#pc)"><rect x="0" y="0" width="33" height="45" fill="#2ba6e2" /><ellipse cx="16" cy="20" rx="11" ry="10" fill="#6b4a32" /><ellipse cx="16" cy="25" rx="8.5" ry="10.5" fill="#e8b492" /><path d="M11.5 29q4.500 4 9 0q-4.500 1.400-9 0z" fill="#fff" fill-opacity=".9"/><path d="M0 45V39c5-4 10-5 16-5s12 1 17 5v6z" fill="#f2f2f6"/><path d="M0 45v-5c3-2 6-3 8-2l2 7zM23 39c3-1 7 0 10 2v4h-9z" fill="#1c2b5c"/><ellipse cx="26" cy="42" rx="2.5" ry="2" fill="#e8c23c" /></g></g>
<g transform="matrix(1 -0.15 0 1 578.0 167.0)"><g clip-path="url(#pc)"><rect x="0" y="0" width="33" height="45" fill="#eceeec" /><rect x="27" y="0" width="3" height="30" fill="#38463c" /><ellipse cx="15" cy="19" rx="13" ry="16" fill="#3c261c" /><ellipse cx="15.5" cy="22" rx="9" ry="12" fill="#b47c54" /><path d="M11 28q4.500 4 9 0q-4.500 1.400-9 0z" fill="#fff" fill-opacity=".9"/><path d="M0 45V38c2-3 5-5 8-5l8 4 9-5c4 1 7 4 8 8v5z" fill="#49a9b9"/></g></g>
<g transform="matrix(1 -0.15 0 1 398.5 225.6)"><g clip-path="url(#pc)"><rect x="0" y="0" width="33" height="45" fill="#ddd2bc" /><rect x="24" y="6" width="9" height="30" fill="#d8cf88" /><ellipse cx="15" cy="27" rx="10.5" ry="19" fill="#dc9244" /><ellipse cx="15" cy="24" rx="8" ry="11" fill="#efc7a8" /><ellipse cx="15" cy="14.5" rx="13.5" ry="4.6" fill="#48473f" /><ellipse cx="15" cy="10.5" rx="9" ry="7" fill="#48473f" /><path d="M5 45c0-9 1-16 3-20l4 6-1 14zM24 45c1-8 0-14-1-19l-4 6 1 13z" fill="#dc9244"/><path d="M22 45c1-4 5-6 11-6v6z" fill="#3fa088"/><rect x="0" y="0" width="33" height="45" fill="#ffffff" fill-opacity=".18"/></g></g>
<g transform="matrix(1 -0.15 0 1 445.0 222.6)"><g clip-path="url(#pc)"><rect x="0" y="0" width="33" height="45" fill="#e3e1df" /><rect x="0" y="8" width="5" height="30" fill="#cfc3c0" /><rect x="27" y="10" width="6" height="22" fill="#cfd5d2" /><ellipse cx="17" cy="20" rx="10" ry="12" fill="#3e2a22" /><ellipse cx="17" cy="12.5" rx="13" ry="5" fill="#ecd5a6" /><ellipse cx="17" cy="8.5" rx="8.5" ry="6.5" fill="#f0dcb0" /><ellipse cx="17" cy="24" rx="7.8" ry="10.5" fill="#ebbea4" /><path d="M9 20c2-5 8-7 14-5l-2 3c-5-1-9 0-12 2z" fill="#3e2a22"/><path d="M12.5 28q4.500 4 9 0q-4.500 1.400-9 0z" fill="#fff" fill-opacity=".9"/><path d="M1 45c1-6 5-9 10-9l6 4 6-4c5 0 9 3 10 9z" fill="#b9d3e8"/><rect x="0" y="0" width="33" height="45" fill="#ffffff" fill-opacity=".2"/></g></g>
<g transform="matrix(1 -0.15 0 1 491.5 219.6)"><g clip-path="url(#pc)"><rect x="0" y="0" width="33" height="45" fill="#f1a31c" /><rect x="0" y="0" width="33" height="6" fill="#6a5a48" /><rect x="0" y="6" width="9" height="7" fill="#b9a58a" /><rect x="28" y="2" width="5" height="10" fill="#8a5a3a" /><ellipse cx="17" cy="13" rx="9" ry="8" fill="#2a221e" /><ellipse cx="17" cy="19" rx="7.5" ry="10" fill="#dba474" /><path d="M12.5 23q4.500 4 9 0q-4.500 1.400-9 0z" fill="#fff" fill-opacity=".9"/><path d="M0 45V34c4-4 9-6 13-6l4 3 4-3c5 0 9 2 12 6v11z" fill="#3b9384"/></g></g>
<g transform="matrix(1 -0.15 0 1 538.0 216.6)"><g clip-path="url(#pc)"><rect x="0" y="0" width="33" height="45" fill="#bdd3ea" /><rect x="0" y="0" width="5" height="45" fill="#dcdad2" /><ellipse cx="17" cy="15" rx="9.5" ry="10.5" fill="#2b2120" /><ellipse cx="16.5" cy="21" rx="7.8" ry="10.8" fill="#d39a76" /><path d="M12 26q4.500 4 9 0q-4.500 1.400-9 0z" fill="#fff" fill-opacity=".9"/><path d="M5 45c1-5 5-8 9-8h6c5 0 9 3 10 8z" fill="#e2b496"/><path d="M10 45l4-7 6 0 4 7z" fill="#f0e4dc"/><ellipse cx="17" cy="42" rx="4" ry="1.5" fill="#e87868" /></g></g>
<g transform="matrix(1 -0.15 0 1 584.5 213.6)"><g clip-path="url(#pc)"><rect x="0" y="0" width="33" height="45" fill="#f1f1ef" /><rect x="24" y="0" width="9" height="12" fill="#7cab68" /><path d="M0 45V20c3 6 4 14 3 25z" fill="#5a9650"/><rect x="0" y="36" width="8" height="9" fill="#5f9a54" /><ellipse cx="18" cy="13" rx="14" ry="11" fill="#1f1d1d" /><ellipse cx="18" cy="24" rx="12" ry="16" fill="#efc8aa" /><path d="M5 14c3-8 9-11 15-10 6 1 10 5 11 11-5-5-12-6-18-4-3 1-6 2-8 3z" fill="#1f1d1d"/><g fill="#b06a3a" fill-opacity=".25" stroke="#3a2a22" stroke-width="1.200"><ellipse cx="12" cy="22" rx="4.500" ry="4"/><ellipse cx="23.500" cy="20" rx="4.500" ry="4"/></g><path d="M12 31q6 5 13-1q-6 3-13 1z" fill="#fff"/><path d="M6 45c2-4 6-6 10-6h6c4 0 8 2 11 6z" fill="#a4a49e"/></g></g>
<g transform="matrix(1 -0.15 0 1 405.0 272.2)"><g clip-path="url(#pc)"><rect x="0" y="0" width="33" height="45" fill="#e6e6e6" /><rect x="25" y="3" width="8" height="20" fill="#8a9098" /><rect x="0" y="22" width="5" height="23" fill="#c3c8d0" /><ellipse cx="15" cy="15" rx="10" ry="10" fill="#1e1816" /><ellipse cx="16" cy="22" rx="8.5" ry="11.5" fill="#6f4533" /><path d="M12 27q4.500 4 9 0q-4.500 1.400-9 0z" fill="#fff" fill-opacity=".9"/><path d="M0 45V39c5-4 10-5 15-5s12 2 18 6v5z" fill="#38383a"/><rect x="0" y="0" width="33" height="45" fill="#ffffff" fill-opacity=".12"/></g></g>
<g transform="matrix(1 -0.15 0 1 451.5 269.2)"><g clip-path="url(#pc)"><rect x="0" y="0" width="33" height="45" fill="#ccbdad" /><ellipse cx="9" cy="8" rx="6.5" ry="6" fill="#1f1917" /><ellipse cx="24" cy="8" rx="6.5" ry="6" fill="#1f1917" /><ellipse cx="16.5" cy="15" rx="10.5" ry="9" fill="#1f1917" /><ellipse cx="16.5" cy="5" rx="5" ry="3" fill="#5a8ac8" /><ellipse cx="16.5" cy="23" rx="8.3" ry="11" fill="#7d4d39" /><path d="M12 28q4.500 4 9 0q-4.500 1.400-9 0z" fill="#fff" fill-opacity=".9"/><path d="M0 45v-4c5-4 10-6 16-6s12 2 17 6v4z" fill="#e97c79"/><ellipse cx="16.5" cy="37" rx="4" ry="3.5" fill="#7d4d39" /></g></g>
<g transform="matrix(1 -0.15 0 1 498.0 266.2)"><g clip-path="url(#pc)"><rect x="0" y="0" width="33" height="45" fill="#eeeeee" /><rect x="0" y="6" width="6" height="30" fill="#d4e0ea" /><rect x="26" y="12" width="7" height="24" fill="#dfe8ee" /><ellipse cx="17" cy="11" rx="9" ry="7" fill="#1d1917" /><ellipse cx="17" cy="20" rx="8.5" ry="12" fill="#9d6b4b" /><rect x="9.5" y="16" width="6.8" height="4.2" fill="#161d27" rx="1.800"/><rect x="17.7" y="16" width="6.8" height="4.2" fill="#161d27" rx="1.800"/><rect x="15" y="16.8" width="4" height="1.2" fill="#161d27" /><path d="M10 26c2 7 12 7 14 0-2 5-5 7-7 7s-5-2-7-7z" fill="#2a201a"/><path d="M12.5 26q4.500 4 9 0q-4.500 1.400-9 0z" fill="#fff" fill-opacity=".9"/><path d="M0 45c1-5 6-8 12-9l5 3 5-3c6 1 10 4 11 9z" fill="#7b9bb9"/></g></g>
<g transform="matrix(1 -0.15 0 1 544.5 263.2)"><g clip-path="url(#pc)"><rect x="0" y="0" width="33" height="45" fill="#a9d3eb" /><rect x="24" y="0" width="9" height="30" fill="#6bb1d1" /><rect x="0" y="0" width="5" height="40" fill="#8cc4e0" /><ellipse cx="16.5" cy="26" rx="12.5" ry="22" fill="#ecd49c" /><ellipse cx="16.5" cy="22" rx="8" ry="11.5" fill="#f1c9a9" /><path d="M12 27q4.500 4 9 0q-4.500 1.400-9 0z" fill="#fff" fill-opacity=".9"/><path d="M0 45c1-4 4-6 8-7l4 7zM33 45c-1-4-4-6-8-7l-4 7z" fill="#4a92d2"/><path d="M8 16c2-7 8-9 13-7 3 1 5 4 5 8-4-4-9-5-13-4-2 1-4 2-5 3z" fill="#ecd49c"/></g></g>
<g transform="matrix(1 -0.15 0 1 591.0 260.2)"><g clip-path="url(#pc)"><rect x="0" y="0" width="33" height="45" fill="#e32b4b" /><rect x="24" y="12" width="9" height="22" fill="#26365a" /><ellipse cx="15.5" cy="14" rx="11.5" ry="12" fill="#1f1d21" /><ellipse cx="15.5" cy="22" rx="8.5" ry="11.5" fill="#b27b53" /><rect x="8" y="18" width="6.8" height="4.4" fill="#13151b" rx="1.800"/><rect x="16.2" y="18" width="6.8" height="4.4" fill="#13151b" rx="1.800"/><rect x="14" y="18.8" width="3" height="1.2" fill="#13151b" /><path d="M11 28q4.500 4 9 0q-4.500 1.400-9 0z" fill="#fff" fill-opacity=".9"/><path d="M0 45V37c5-4 10-5 15-5s12 2 18 5v8z" fill="#3b7bdb"/><path d="M5 16c2-8 8-11 14-9 4 1 7 4 8 9-4-4-10-6-16-4-2 1-4 2-6 4z" fill="#1f1d21"/></g></g>
<polygon points="492,159 658,134 658,168.600 492,193.600" fill="#f5255d"/>
<polygon points="492,159 658,134 658,136 492,161" fill="#f7457a" fill-opacity=".6"/>
<path d="M658 134l9-1.400v8l-9 1.400" stroke="#ececec" stroke-width=".6" fill="none"/>
<g transform="translate(520 181)" fill="none" stroke="#fff" stroke-width=".9"><circle r="1.800"/><circle r="4.600" stroke-dasharray="2.100 1.500" stroke-width="2.200" stroke-opacity=".9"/><circle r="3.700" stroke="#f5255d" stroke-width="1.600"/><circle r="3.900" stroke-width=".7"/></g>
<path d="M582.500 171.500v5M584.500 171.200v5M586.500 170.900v5" stroke="#fff" stroke-width=".9"/>
<text transform="translate(400.500 326.500) rotate(-7.600)" font-family="Liberation Sans, sans-serif" font-size="11.300" fill="#f02a5e" textLength="99" lengthAdjust="spacingAndGlyphs">Play Trivia with Your Fr</text>
<ellipse cx="409" cy="351.500" rx="4" ry="4.800" fill="#f02a5e"/>
<text transform="translate(408 353.500) rotate(-7)" font-family="Liberation Sans, sans-serif" font-size="5" fill="#fff" font-weight="bold">?</text>
<text transform="translate(417 353) rotate(-7.600)" font-family="Liberation Sans, sans-serif" font-size="9.500" fill="#3a3a3a" textLength="29" lengthAdjust="spacingAndGlyphs">Start a n</text>
<polygon points="416,349 446,344.500 446,349.500 416,354" fill="#fff" fill-opacity=".55"/>
<g transform="translate(416 376)"><circle r="3.800" fill="none" stroke="#f02a5e" stroke-width="2" stroke-dasharray="1.600 1.050"/><circle r="1.300" fill="none" stroke="#f02a5e" stroke-width=".8"/></g>
<text transform="translate(424.300 379.200) rotate(-7.600)" font-family="Liberation Sans, sans-serif" font-size="10.800" fill="#2e2e2e" textLength="67" lengthAdjust="spacingAndGlyphs">Find an existing game</text>
<polygon points="383.700,389.500 536.600,366.500 536.600,392 383.700,412.800" fill="#e2e2e2"/>
<g transform="translate(385 395.500) rotate(-7.800)" font-family="Liberation Sans, sans-serif" font-size="5.600" fill="#555"><text textLength="150" lengthAdjust="spacingAndGlyphs">Start a new game lets you choose a genre and invite your friends to</text><text y="7.600" textLength="146" lengthAdjust="spacingAndGlyphs">play. Find an existing game lets you hop into a game that’s already</text><text y="15.200" textLength="30" lengthAdjust="spacingAndGlyphs">been created.</text></g>
<polygon points="510,370.500 536.600,366.500 536.600,392 510,396" fill="#e6e6e6" fill-opacity=".6"/>
<polygon points="383.700,389.500 509.600,370.600 509.600,394.500 383.700,412.800" fill="none" stroke="#2c3854" stroke-width="1"/>
<path d="M509.600 394.500l8-1.200" stroke="#9fb6dc" stroke-width=".8"/>
<polygon points="377.600,522 516.700,501.300 540,497.800 551,496 551,512.500 516.700,517.600 377.600,541" fill="#ffffff"/>
<path d="M377.600 522L509.600 502.200" stroke="#3a3a3a" stroke-width=".9"/>
<polygon points="377.600,522 516.700,501.300 516.700,517.600 377.600,539" fill="none" stroke="#e3e6ee" stroke-width=".7"/>
<polygon points="384,526 545,502 545,521 384,545" fill="none" stroke="#ececec" stroke-width=".7"/>
<polygon points="372,524 551,497 551,514 372,545" fill="none" stroke="#efefef" stroke-width=".7"/>
<path d="M372 540l146-22" stroke="#c9d8f2" stroke-width=".7"/>
<path d="M409 528.500l-5 1v3l-3.500 3 3.500 2v3.500l5-.8M401 535.500h7.500" stroke="#f02a5e" stroke-width="1.300" fill="none"/>
<text transform="translate(412.500 537.600) rotate(-7.600)" font-family="Liberation Sans, sans-serif" font-size="7.500" fill="#4a4a4a">Sign</text>
<polygon points="412,532.500 428,530 428,534 412,536.500" fill="#fff" fill-opacity=".45"/>
<path d="M265 579.5H369" stroke="#c6c6c6" stroke-width="1.600" stroke-linecap="round"/>
<path d="M265 579.5H284" stroke="#2b83ea" stroke-width="1.600" stroke-linecap="round"/>
<circle cx="288" cy="579.5" r="6.300" fill="#fff" stroke="#c9c9c9" stroke-width=".8"/>
<g fill="none" stroke="#5f5f5f" stroke-width="1.100"><rect x="387.700" y="574.0" width="11" height="7"/><path d="M387.200 584.7h12" stroke-dasharray="1.500 1"/><path d="M387.700 581.0v3.500M398.700 581.0v3.500" stroke-width=".8"/></g>
<g fill="none" stroke="#5f5f5f" stroke-width="1.200"><rect x="411.700" y="574.0" width="11" height="11"/><path d="M411.700 579.5h11M414 577.5l-2 2 2 2M420.400 577.5l2 2-2 2" stroke-width=".9"/></g>
<g fill="none" stroke="#5f5f5f" stroke-width="1.100"><rect x="434.700" y="573.5" width="7" height="6"/><rect x="437.500" y="576.5" width="7" height="6" fill="#fff"/><rect x="440.500" y="579.8" width="6.500" height="5.700" fill="#fff"/><path d="M442.500 581.5v2.500M445 581.5v2.500" stroke-width=".7"/></g>
<g fill="none" stroke="#8a8a8a" stroke-width="1"><rect x="475.700" y="574.0" width="11" height="11"/><path d="M481.200 574.0v11M475.700 579.5h11"/></g>
<path d="M517 579.5h12M541 577.5h12M541 581.5h12M565 579.5h12M571 573.5v12" stroke="#6b6b6b" stroke-width="1" fill="none"/>
<path d="M599 579.5H730" stroke="#2b83ea" stroke-width="1.800"/>
<rect x="591.5" y="573.0" width="9" height="13" rx="2" fill="#fff" stroke="#c4c4c4" stroke-width=".8"/>
<rect x="727.8" y="573.0" width="9" height="13" rx="2" fill="#fff" stroke="#c4c4c4" stroke-width=".8"/>
</svg>
<div class="abs" style="left:739.3px;top:33px;width:1.4px;height:531px;background:#bdbdbd"></div>
<div class="abs" style="left:740.5px;top:59px;width:18px;height:505px;background:#f5f5f5"></div>
<pre id="code" class="abs" style="left:764.6px;top:70.9px;margin:0;font-family:'Liberation Mono',monospace;font-size:9.77px;line-height:11.56px;color:#111;letter-spacing:0px;-webkit-text-stroke:.22px">
<span style="color:#1d9223">/// Custom view that renders in IB with photos of my group of friends</span>
<span style="color:#b3219c">@IBDesignable</span>
<span style="color:#b3219c">public class</span> SplashScreenPeopleWallView: <span style="color:#6834a8">UIView</span>, <span style="color:#6834a8">UIScrollViewDelegate</span> {

    <span style="color:#b3219c">@IBOutlet var</span> delegate: <span style="color:#4b7c84">SplashScreenPeopleWallViewDelegate</span>? {
        <span style="color:#b3219c">didSet</span> {
            <span style="color:#2f555b">reloadData</span>()
        }
    }

    <span style="color:#b3219c">private static let</span> kNumberOfColumns = <span style="color:#2a14d8">5</span>
    <span style="color:#b3219c">private static let</span> kNumberOfRows = <span style="color:#2a14d8">3</span>

    <span style="color:#b3219c">private var</span> scrollView: <span style="color:#6834a8">UIScrollView</span>!
    <span style="color:#b3219c">private var</span> imageViews: [<span style="color:#6834a8">UIImageView</span>] = []
    <span style="color:#b3219c">private var</span> displayLink: <span style="color:#6834a8">CADisplayLink</span>!

    <span style="color:#b3219c">required public init</span>(coder aDecoder: <span style="color:#6834a8">NSCoder</span>) {
        <span style="color:#b3219c">super</span>.<span style="color:#b3219c">init</span>(coder: aDecoder)!
        <span style="color:#2f555b">commonInit</span>()
    }

    <span style="color:#b3219c">public override init</span>(frame: <span style="color:#6834a8">CGRect</span>) {
        <span style="color:#b3219c">super</span>.<span style="color:#b3219c">init</span>(frame: frame)
        <span style="color:#2f555b">commonInit</span>()
    }

    <span style="color:#b3219c">private func</span> commonInit() {
        <span style="color:#4b7c84">scrollView</span> = <span style="color:#6834a8">UIScrollView</span>(frame: <span style="color:#6834a8">CGRectZero</span>)
        <span style="color:#4b7c84">scrollView</span>.<span style="color:#6834a8">showsHorizontalScrollIndicator</span> = <span style="color:#b3219c">false</span>
        <span style="color:#4b7c84">scrollView</span>.<span style="color:#6834a8">scrollEnabled</span> = <span style="color:#b3219c">false</span>

        <span style="color:#b3219c">for</span> <span style="color:#b3219c">_</span> <span style="color:#b3219c">in</span> <span style="color:#2a14d8">0</span> ..&lt; <span style="color:#4b7c84">SplashScreenPeopleWallView</span>.kNumberOfRows *
            (<span style="color:#4b7c84">SplashScreenPeopleWallView</span>.kNumberOfColumns + <span style="color:#2a14d8">1</span>) {
            <span style="color:#b3219c">let</span> imageView = <span style="color:#6834a8">UIImageView</span>(frame: <span style="color:#6834a8">CGRectZero</span>)
            <span style="color:#4b7c84">scrollView</span>.<span style="color:#3a1a80">addSubview</span>(imageView)
            <span style="color:#4b7c84">imageViews</span>.<span style="color:#3a1a80">append</span>(imageView)
        }

        <span style="color:#4b7c84">scrollView</span>.<span style="color:#6834a8">delegate</span> = <span style="color:#b3219c">self</span>
        <span style="color:#3a1a80">addSubview</span>(<span style="color:#4b7c84">scrollView</span>)
    }
</pre>
<div class="abs" style="left:741.5px;top:119.3px;width:5px;height:5px;border:1px solid #b5b5b5;border-radius:50%"></div>
<svg class="abs" style="left:740px;top:394px" width="24" height="11" viewBox="0 0 24 11"><path d="M0 0h19.600l4.200 5.250-4.200 5.250H0z" fill="#4683c4"/></svg>
<div class="abs" style="left:231px;top:564px;width:1019px;height:25px;background:#f3f3f3;border-top:1px solid #cdcdcd;border-bottom:1px solid #cdcdcd"></div>
<div class="abs" style="left:739px;top:589px;width:1px;height:91px;background:#c9c9c9"></div>
<div class="abs" style="left:231px;top:654px;width:1019px;height:1px;background:#d4d4d4"></div>
<svg class="abs" style="left:238.0px;top:570.8px" width="14" height="11" viewBox="0 0 14 11" fill="none" stroke="#6a6a6a" stroke-width="1"><rect x=".6" y=".6" width="12.800" height="9.800" rx="1"/><path d="M4 4h6L7 7.500z" fill="#6a6a6a" stroke="none"/></svg>
<svg class="abs" style="left:266.3px;top:571.8px" width="13" height="9" viewBox="0 0 13 9" fill="none" stroke="#6a6a6a" stroke-width="1"><path d="M0 .5h9l4 4-4 4H0z" fill="#1d7cf2" stroke="none"/></svg>
<svg class="abs" style="left:294.5px;top:571.3px" width="14" height="10" viewBox="0 0 14 10" fill="none" stroke="#6a6a6a" stroke-width="1"><path d="M1 .5v9M3.800 .5v9" stroke-width="1.100"/><path d="M7 .8v8.400L13 5z"/></svg>
<svg class="abs" style="left:324.0px;top:570.8px" width="13" height="11" viewBox="0 0 13 11" fill="none" stroke="#6a6a6a" stroke-width="1"><path d="M1.500 6.500l4-4.500 4 4.500"/><path d="M8.500 3.500l2.200 3-3.300.300" stroke-width=".9"/><circle cx="6" cy="9.300" r="1" fill="#6a6a6a" stroke="none"/></svg>
<svg class="abs" style="left:354.9px;top:570.3px" width="9" height="12" viewBox="0 0 9 12" fill="none" stroke="#6a6a6a" stroke-width="1"><path d="M4.500 0v7M2 4.500L4.500 7.500 7 4.500"/><circle cx="4.500" cy="10.500" r="1" fill="#6a6a6a" stroke="none"/></svg>
<svg class="abs" style="left:381.1px;top:570.3px" width="11" height="12" viewBox="0 0 11 12" fill="none" stroke="#6a6a6a" stroke-width="1"><path d="M5.500 8.500V1M3 4L5.500 1 8 4"/><path d="M.5 11h10"/></svg>
<div class="abs" style="left:401.6px;top:568.5px;width:1px;height:15px;background:#c9c9c9"></div>
<svg class="abs" style="left:408.5px;top:570.3px" width="13" height="12" viewBox="0 0 13 12" fill="none" stroke="#6a6a6a" stroke-width="1"><rect x="3.500" y=".6" width="6" height="10.800" rx="1"/><path d="M1.200 2v8M11.800 2v8"/></svg>
<div class="abs" style="left:429px;top:568.5px;width:1px;height:15px;background:#c9c9c9"></div>
<svg class="abs" style="left:437.5px;top:570.3px" width="12" height="12" viewBox="0 0 12 12" fill="none" stroke="#6a6a6a" stroke-width="1"><path d="M11 1L1 5.500l4.500 1L6.500 11z"/></svg>
<div class="abs" style="left:457.7px;top:568.5px;width:1px;height:15px;background:#c9c9c9"></div>
<div class="abs" style="left:464.6px;top:569.5px;width:13.5px;height:13.5px;border-radius:2.500px;background:linear-gradient(160deg,#f24a5e,#c0102a);color:#fff;font-weight:bold;font-size:8.1px;line-height:13.5px;text-align:center">?<div style="position:absolute;left:1.89px;top:1.89px;width:9.72px;height:9.72px;border-radius:50%;border:.8px solid rgba(255,255,255,.85)"></div></div>
<div class="t" style="left:483px;top:569.8px;font-size:10.4px;line-height:13px;color:#262626;">Trivia</div>
<svg class="abs" style="left:510.1px;top:570.8px" width="5" height="11" viewBox="0 0 5 11" fill="none" stroke="#b0b0b0" stroke-width="1"><path d="M.8 .5L4 5.5 .8 10.5"/></svg>
<div class="abs" style="left:520px;top:571px;width:10px;height:10.500px;border-radius:2px;background:linear-gradient(#6aa0e8,#2a5fc0)"></div>
<div class="abs" style="left:519px;top:570.3px;width:12px;height:2px;background:#8a949e;border-radius:1px"></div>
<div class="abs" style="left:519px;top:580.3px;width:12px;height:2px;background:#8a949e;border-radius:1px"></div>
<div class="t" style="left:536px;top:569.8px;font-size:10.4px;line-height:13px;color:#262626;">Thread 1</div>
<svg class="abs" style="left:578.0px;top:570.8px" width="5" height="11" viewBox="0 0 5 11" fill="none" stroke="#b0b0b0" stroke-width="1"><path d="M.8 .5L4 5.5 .8 10.5"/></svg>
<div class="abs" style="left:586.5px;top:570.2px;width:12.500px;height:12.500px;border-radius:2px;background:#d9b877"></div>
<div class="abs" style="left:590px;top:573.7px;width:5.500px;height:5.500px;border-radius:50%;border:1.300px solid #fff7e4"></div>
<div class="t" style="left:604px;top:569.8px;font-size:10.4px;line-height:13px;color:#262626;">0 mach_msg_trap</div>
<svg class="abs" style="left:237px;top:594.4px" width="8" height="7" viewBox="0 0 8 7"><path d="M.3 .5h7.400L4 6.700z" fill="#777"/></svg>
<div class="abs" style="left:250.2px;top:592px;width:11.500px;height:11.500px;border-radius:2px;background:#d9a9c4;color:#fff;font-size:8.5px;line-height:11.500px;text-align:center;font-weight:bold">R</div>
<div class="t" style="left:266px;top:591.2px;font-size:10.4px;line-height:13px;color:#111;font-weight:bold">Exception State Registers</div>
<div class="t" style="left:261.4px;top:607.3px;font-size:10.9px;line-height:13px;color:#222;"><b style="color:#111;font-size:10.5px">trapno</b> = <span style="color:#9a9a9a;font-size:9.9px">(unsigned int)</span> 0x00000003</div>
<div class="t" style="left:261.4px;top:623.3px;font-size:10.9px;line-height:13px;color:#222;"><b style="color:#111;font-size:10.5px">err</b> = <span style="color:#9a9a9a;font-size:9.9px">(unsigned int)</span> 0x00000000</div>
<div class="t" style="left:261.4px;top:638.9px;font-size:10.9px;line-height:13px;color:#222;"><b style="color:#111;font-size:10.5px">faultvaddr</b> = <span style="color:#9a9a9a;font-size:9.9px">(unsigned long)</span> 0x00000001096d3000</div>
<div class="t" style="left:240px;top:661.1px;font-size:10.3px;line-height:13px;color:#333;">All</div>
<svg class="abs" style="left:256.5px;top:663.1px" width="6" height="9" viewBox="0 0 6 9" fill="none" stroke="#444" stroke-width="1"><path d="M.8 3.200L3 1l2.200 2.200M.8 5.800L3 8l2.200-2.200"/></svg>
<div class="abs" style="left:268px;top:660.5px;width:1px;height:14px;background:#d4d4d4"></div>
<svg class="abs" style="left:273.5px;top:663.1px" width="14" height="9" viewBox="0 0 14 9" fill="none" stroke="#cfcfcf" stroke-width="1"><path d="M.6 4.500C3 1 11 1 13.400 4.500 11 8 3 8 .6 4.500z"/><circle cx="7" cy="4.500" r="1.800"/></svg>
<svg class="abs" style="left:293px;top:661.6px" width="12" height="12" viewBox="0 0 12 12" fill="none" stroke="#cfcfcf" stroke-width="1"><circle cx="6" cy="6" r="5.300"/><path d="M6 5v4M6 3v1"/></svg>
<div class="abs" style="left:581.7px;top:658.6px;width:153.500px;height:18.500px;border:1px solid #dcdcdc;border-radius:3px;background:#fff"></div>
<svg class="abs" style="left:585.5px;top:661.3px" width="13" height="13" viewBox="0 0 13 13"><circle cx="6.500" cy="6.500" r="5.600" fill="#fff" stroke="#8f8f8f" stroke-width="1"/><path d="M3.800 6.200a2.700 2.200 0 0 1 5.400 0v.8H3.800z" fill="#8f8f8f"/></svg>
<div class="t" style="left:602px;top:661.1px;font-size:10.4px;line-height:13px;color:#a6a6a6;">Filter</div>
<pre class="abs" style="left:745.2px;top:592.8px;margin:0;font-family:'Liberation Mono',monospace;font-size:9.77px;line-height:11.56px;color:#111;height:61.500px;overflow:hidden;-webkit-text-stroke:.22px"><span style="color:#4a6fd0">(lldb)</span> <b>help</b>
Debugger commands:

  apropos           -- Find a list of debugger commands related to a particular
                       word/subject.
  breakpoint        -- A set of commands for operating on breakpoints. Also see
</pre>
<div class="t" style="left:749.7px;top:661.1px;font-size:10.3px;line-height:13px;color:#333;">All Output</div>
<svg class="abs" style="left:800px;top:663.1px" width="6" height="9" viewBox="0 0 6 9" fill="none" stroke="#444" stroke-width="1"><path d="M.8 3.200L3 1l2.200 2.200M.8 5.800L3 8l2.200-2.200"/></svg>
<svg class="abs" style="left:1192.5px;top:660.5px" width="11" height="14" viewBox="0 0 11 14" fill="none" stroke="#b9b9b9" stroke-width="1"><path d="M.5 3h10M3.500 3V1.200h4V3M1.500 3l.6 10.400h6.800L9.500 3M4 5.500v5.500M5.500 5.500v5.500M7 5.500v5.500"/></svg>
<div class="abs" style="left:1210px;top:660.5px;width:1px;height:14px;background:#d4d4d4"></div>
<div class="abs" style="left:1215px;top:660.8px;width:13px;height:13.200px;border:1.500px solid #2b83ea;background:#fff"></div>
<div class="abs" style="left:1216.5px;top:662.3px;width:2.800px;height:10.200px;background:#2b83ea"></div>
<div class="abs" style="left:1231px;top:660.8px;width:13px;height:13.200px;border:1.500px solid #2b83ea;background:#fff"></div>
<div class="abs" style="left:1239.7px;top:662.3px;width:2.800px;height:10.200px;background:#2b83ea"></div>
</div>
<svg id="dock" class="abs" style="left:0;top:720px" width="1280" height="80" viewBox="0 720 1280 80">
<defs>
<linearGradient id="fb" x1="0" y1="0" x2="0" y2="1"><stop offset="0" stop-color="#35b6f8"/><stop offset="1" stop-color="#1b78e2"/></linearGradient>
<linearGradient id="sf" x1="0" y1="0" x2="0" y2="1"><stop offset="0" stop-color="#2cc0fa"/><stop offset="1" stop-color="#1a62dc"/></linearGradient>
<linearGradient id="ms" x1="0" y1="0" x2="0" y2="1"><stop offset="0" stop-color="#2f7fdc"/><stop offset="1" stop-color="#86bdf0"/></linearGradient>
<linearGradient id="bp" x1="0" y1="0" x2="0" y2="1"><stop offset="0" stop-color="#62b9f6"/><stop offset="1" stop-color="#3595ea"/></linearGradient>
<linearGradient id="it" x1="0" y1="0" x2="1" y2="1"><stop offset="0" stop-color="#f05a8a"/><stop offset=".5" stop-color="#b45ae0"/><stop offset="1" stop-color="#3ab0f8"/></linearGradient>
<linearGradient id="note" x1="0" y1="0" x2="0" y2="1"><stop offset="0" stop-color="#f4465e"/><stop offset=".5" stop-color="#c65ad0"/><stop offset="1" stop-color="#4a8af0"/></linearGradient>
<linearGradient id="ib" x1="0" y1="0" x2="0" y2="1"><stop offset="0" stop-color="#f8a21e"/><stop offset="1" stop-color="#ea6a12"/></linearGradient>
<linearGradient id="as" x1="0" y1="0" x2="0" y2="1"><stop offset="0" stop-color="#2ab2fa"/><stop offset="1" stop-color="#1e6ee6"/></linearGradient>
<linearGradient id="sp" x1="0" y1="0" x2="0" y2="1"><stop offset="0" stop-color="#c8ccd0"/><stop offset="1" stop-color="#7e8286"/></linearGradient>
<linearGradient id="tr" x1="0" y1="0" x2="1" y2="0"><stop offset="0" stop-color="#d8dcde"/><stop offset=".4" stop-color="#f2f4f4"/><stop offset="1" stop-color="#d0d4d6"/></linearGradient>
<linearGradient id="ft" x1="0" y1="0" x2="0" y2="1"><stop offset="0" stop-color="#5ee27a"/><stop offset="1" stop-color="#2ac24a"/></linearGradient>
<linearGradient id="msg" x1="0" y1="0" x2="0" y2="1"><stop offset="0" stop-color="#58bcfa"/><stop offset="1" stop-color="#2a8cf0"/></linearGradient>
<linearGradient id="bk" x1="0" y1="0" x2="1" y2="0"><stop offset="0" stop-color="#c29050"/><stop offset="1" stop-color="#d0a060"/></linearGradient>
</defs>
<path d="M51 800V733a4 4 0 0 1 4-4H1224a4 4 0 0 1 4 4V800z" fill="#5a6563"/>
<path d="M51.500 800V733a3.500 3.500 0 0 1 3.500-3.500H1224a3.500 3.500 0 0 1 3.500 3.500V800" fill="none" stroke="#727c7a" stroke-width=".8" stroke-opacity=".7"/>
<g><rect x="62" y="741" width="46.800" height="43" rx="4" fill="#eef2f6"/><path d="M66 741h21c-3 8-4.500 16-4.500 23h4.500c0 7 .5 14 1.500 20H66a4 4 0 0 1-4-4v-35a4 4 0 0 1 4-4z" fill="url(#fb)"/><path d="M75 753v4M95.500 753v4" stroke="#1c2a3a" stroke-width="1.600" stroke-linecap="round"/><path d="M71 768c8 7 20 7 28.500 0" stroke="#1c2a3a" stroke-width="1.500" fill="none" stroke-linecap="round"/></g>
<g><circle cx="145" cy="762.500" r="25" fill="#eceef0"/><circle cx="145" cy="762.500" r="23.300" fill="url(#sf)"/><circle cx="145" cy="762.500" r="20.800" fill="none" stroke="#dff2ff" stroke-width="2.200" stroke-dasharray=".5 1.700" stroke-opacity=".7"/><path d="M160 747.500L142.500 760 147.500 765z" fill="#f0383a"/><path d="M130 777.500L142.500 760 147.500 765z" fill="#f2f4f6"/></g>
<g transform="rotate(-9 205 762.500)"><rect x="186.500" y="738.500" width="37" height="48" fill="#fbfbfb" stroke="#fbfbfb" stroke-width="2.400" stroke-dasharray="2 1.200"/><rect x="189.500" y="741.500" width="31" height="42" fill="url(#ms)"/><path d="M197 747c3 1 5.500 5 7 11 4 1 9 4 13 9-4.500 1.500-8 1-11 .5-2 2.500-5 4-8.500 4 1-2.500 2.500-4 4-5.500-3-5-5-12-4.500-19z" fill="#8a7258"/><path d="M197.500 748c2.500 2 4 5.500 5 10l-1.500 6c-2.500-5-4-10.500-3.500-16z" fill="#ece6da"/><path d="M201 766c2-3 6-2.500 9-.5-3 .8-5 2-6.500 4-2 .8-4 1.200-6 1 1-2 2-3.500 3.500-4.500z" fill="#b89458"/><circle cx="216" cy="776" r="5.500" fill="none" stroke="#5a6a7a" stroke-width=".6" stroke-opacity=".5"/><rect x="213" y="773.500" width="4.500" height="4.500" fill="#2a5aa8" fill-opacity=".75"/></g>
<g transform="rotate(-8 266 762.500)"><rect x="281" y="744" width="6" height="10" fill="#e8e8e8"/><rect x="281" y="754" width="6" height="9" fill="#6ac8d8"/><rect x="281" y="763" width="6" height="9" fill="#8ad068"/><rect x="281" y="772" width="6" height="9" fill="#f0c040"/><rect x="244" y="738.500" width="39" height="48" rx="3" fill="url(#bk)"/><rect x="244" y="738.500" width="5" height="48" rx="2" fill="#b88848"/><circle cx="265" cy="761" r="10.500" fill="#bf9054"/><circle cx="265" cy="758" r="3.800" fill="#b08048"/><path d="M258 767c1-4 13-4 14 0a10.500 10.500 0 0 1-14 0z" fill="#b08048"/></g>
<g transform="rotate(-8 325 761.500)"><rect x="305" y="741.500" width="40" height="43" rx="3" fill="#7e8688"/><rect x="305" y="740" width="40" height="41" rx="3" fill="#fafafa"/><path d="M305 755v-12a3 3 0 0 1 3-3h34a3 3 0 0 1 3 3v12z" fill="#e8474a"/><text x="325" y="751.600" text-anchor="middle" font-family="Liberation Sans, sans-serif" font-size="9.800" fill="#fff">SEP</text><text x="325" y="778" text-anchor="middle" font-family="Liberation Sans, sans-serif" font-size="27" fill="#303030">2</text></g>
<g transform="rotate(-8.500 386.500 762)"><rect x="366" y="738.500" width="41" height="47.500" rx="2" fill="#fcfbf6"/><rect x="366" y="738.500" width="41" height="9" rx="2" fill="#f8cc3a"/><path d="M366 747.300h41" stroke="#e0b02a" stroke-width=".7"/><path d="M368 753h37M368 757.500h37M368 762h37M368 766.500h37M368 771h37M368 775.500h37M368 780h37" stroke="#e4e0d4" stroke-width=".7"/></g>
<g transform="rotate(-8.500 446 762)"><rect x="427" y="739.500" width="38" height="46" rx="4" fill="#fafafa"/><path d="M438 750h24M438 759h24M438 768h24M438 777h24" stroke="#e2e2e2" stroke-width=".7"/><circle cx="433.500" cy="749" r="3.200" fill="#f89a2a"/><circle cx="433.500" cy="758" r="3.200" fill="#2a9af0"/><circle cx="433.500" cy="767" r="3.200" fill="#4ad24a"/><circle cx="433.500" cy="776" r="3.200" fill="#c85ae0"/></g>
<g><g transform="rotate(-7 506 765)"><rect x="482" y="747" width="48" height="37" rx="2" fill="url(#bp)"/><path d="M497 778l9-27 9 27M499 768h18M488 764h12" stroke="#cfe8ff" stroke-width="1.700" fill="none" stroke-opacity=".8"/><rect x="486" y="779" width="3" height="2" fill="#d8ecff"/></g><path d="M522.500 744l-7.500 21.500 5.300 1 7.200-21z" fill="#c4c8cc"/><path d="M515 765.500l-6.800 19.500h5.800l6.300-18.500z" fill="#26282c"/><path d="M509.500 739c5-3 13-2.500 19 0l3.500 4-2 3.500-5-2.500-6 .5-2.500-3c-3-.5-5 0-7 1z" fill="#c8ccd0"/></g>
<g transform="rotate(-5 565 762)"><rect x="540.500" y="741" width="50" height="43" rx="1.500" fill="#dfe1e3"/><rect x="540.500" y="741" width="50" height="43" rx="1.500" fill="none" stroke="#9a9ea2" stroke-width=".8"/><rect x="545" y="745.500" width="41" height="33.500" fill="#05080c"/><path d="M556 776l9.500-26 9.500 26M554 767h23M560 758l-6 14M571 758l6 14" stroke="#3a7ad0" stroke-width="2" fill="none"/></g>
<g><g transform="rotate(-7 624 765)"><rect x="600" y="747" width="48" height="37" rx="2" fill="url(#bp)"/><path d="M615 778l9-27 9 27M617 768h18M606 764h12" stroke="#cfe8ff" stroke-width="1.700" fill="none" stroke-opacity=".8"/><rect x="604" y="779" width="3" height="2" fill="#d8ecff"/></g><g transform="rotate(9 642 768)"><rect x="633" y="753" width="17.500" height="32" rx="3" fill="#16181c"/><rect x="634.500" y="757" width="14.500" height="23" fill="#24272c"/></g></g>
<g><circle cx="687.500" cy="761.500" r="25" fill="#f4f4f2"/>
<ellipse cx="687.500" cy="749.500" rx="6.800" ry="10.800" fill="#f8a028" fill-opacity=".88" transform="rotate(0 687.500 761.500)"/>
<ellipse cx="687.500" cy="749.500" rx="6.800" ry="10.800" fill="#f8d030" fill-opacity=".88" transform="rotate(45 687.500 761.500)"/>
<ellipse cx="687.500" cy="749.500" rx="6.800" ry="10.800" fill="#9ad048" fill-opacity=".88" transform="rotate(90 687.500 761.500)"/>
<ellipse cx="687.500" cy="749.500" rx="6.800" ry="10.800" fill="#48c89a" fill-opacity=".88" transform="rotate(135 687.500 761.500)"/>
<ellipse cx="687.500" cy="749.500" rx="6.800" ry="10.800" fill="#58a8f0" fill-opacity=".88" transform="rotate(180 687.500 761.500)"/>
<ellipse cx="687.500" cy="749.500" rx="6.800" ry="10.800" fill="#8a78e0" fill-opacity=".88" transform="rotate(225 687.500 761.500)"/>
<ellipse cx="687.500" cy="749.500" rx="6.800" ry="10.800" fill="#d070c8" fill-opacity=".88" transform="rotate(270 687.500 761.500)"/>
<ellipse cx="687.500" cy="749.500" rx="6.800" ry="10.800" fill="#f0505a" fill-opacity=".88" transform="rotate(315 687.500 761.500)"/>
</g>
<g><ellipse cx="747" cy="760" rx="24.500" ry="20" fill="url(#msg)"/><path d="M733 775c-1 4-4 7-8 8.500 6 0 11-1.500 14-5z" fill="#2f90f0"/><ellipse cx="755.500" cy="771.500" rx="15" ry="11.500" fill="#f6f8fa"/><path d="M762 781c1 2 2.500 3.500 5 4.500-3.500.3-6-.5-8-2.500z" fill="#f6f8fa"/><circle cx="748.500" cy="771.500" r="2.300" fill="#2a78d8"/><circle cx="755.500" cy="771.500" r="2.300" fill="#2a78d8"/><circle cx="762.500" cy="771.500" r="2.300" fill="#2a78d8"/></g>
<g><rect x="782" y="741" width="45" height="40" rx="6" fill="url(#ft)"/><rect x="790" y="752.500" width="20.500" height="17" rx="2.500" fill="#f4f6f4"/><path d="M811.500 759l7.500-6v16l-7.500-6z" fill="#f4f6f4"/><circle cx="819.500" cy="772.500" r="11.800" fill="#f4f6f2"/><path d="M814.500 767c-1 3 2.500 9 7 11l2.500-2-3-2.500-1.500 1c-1.500-1-2.700-3-3.200-4.500l1.500-1-1.500-3.500z" fill="#3ac85a"/></g>
<g><circle cx="867.500" cy="762" r="25" fill="url(#it)"/><circle cx="867.500" cy="762" r="22" fill="#f8f8fa"/><path d="M861 751l17-4v21.500a4.500 3.800 0 1 1-3-3.500V753l-11 2.600v16.400a4.500 3.800 0 1 1-3-3.500z" fill="url(#note)"/></g>
<g><circle cx="927.500" cy="762" r="25" fill="#f4f0ea"/><circle cx="927.500" cy="762" r="23" fill="url(#ib)"/><path d="M912.500 753c5-2 10-2 14 .5v20c-4-2.500-9-2.500-14-.5zM942.500 753c-5-2-10-2-14 .5v20c4-2.500 9-2.500 14-.5z" fill="#fbf6ee"/></g>
<g><circle cx="987.500" cy="762" r="25" fill="#eef2f6"/><circle cx="987.500" cy="762" r="23" fill="url(#as)"/><path d="M976.500 776l11-27M998.500 776l-11-27M972 766.500h31" stroke="#f4f8fc" stroke-width="3" fill="none" stroke-linecap="round"/><circle cx="987.500" cy="762" r="17" fill="none" stroke="#f4f8fc" stroke-width="0"/></g>
<g><rect x="1023.700" y="740" width="49" height="45" rx="2" fill="url(#sp)"/><circle cx="1048" cy="762.500" r="19.300" fill="#232527"/><circle cx="1048" cy="762.500" r="17.300" fill="none" stroke="#a4a8ac" stroke-width="3" stroke-dasharray="2.200 1.680"/><circle cx="1048" cy="762.500" r="14.600" fill="none" stroke="#b4b8bc" stroke-width="3.400"/><circle cx="1048" cy="762.500" r="13" fill="#44474a"/><path d="M1048 762.500v-13M1048 762.500l11.200 6.500M1048 762.500l-11.200 6.500" stroke="#aeb2b6" stroke-width="3.400"/><circle cx="1048" cy="762.500" r="3.400" fill="#c0c4c8"/><circle cx="1048" cy="762.500" r="1.300" fill="#5a5d60"/></g>
<path d="M1092 738v52" stroke="#454f4d" stroke-width="1"/>
<g><path d="M1108.700 744a2 2 0 0 1 2-2h13.500l3.500 4h32.500a2 2 0 0 1 2 2v33a2 2 0 0 1-2 2h-49.500a2 2 0 0 1-2-2z" fill="#86cdf8"/><path d="M1108.700 749h53.500" stroke="#9ad6fa" stroke-width="1"/><circle cx="1135.500" cy="765" r="9.500" fill="#6ab8ec"/><path d="M1135.500 759v9M1131.500 764.500l4 4.500 4-4.500" stroke="#8accf6" stroke-width="2.400" fill="none"/></g>
<g><path d="M1175.500 744l4 41c5 3.500 27 3.500 32 0l4.500-41z" fill="url(#tr)"/><ellipse cx="1195.700" cy="743.500" rx="20.300" ry="5.500" fill="#e4e6e8" stroke="#f6f8f8" stroke-width="1.200"/><ellipse cx="1195.700" cy="744.300" rx="18" ry="3.800" fill="#cdd1d3"/></g>
<circle cx="85" cy="796.300" r="1.600" fill="#0a0c0c"/>
<circle cx="205" cy="796.300" r="1.600" fill="#0a0c0c"/>
<circle cx="506" cy="796.300" r="1.600" fill="#0a0c0c"/>
<circle cx="627" cy="796.300" r="1.600" fill="#0a0c0c"/>
</svg>
</body></html>
